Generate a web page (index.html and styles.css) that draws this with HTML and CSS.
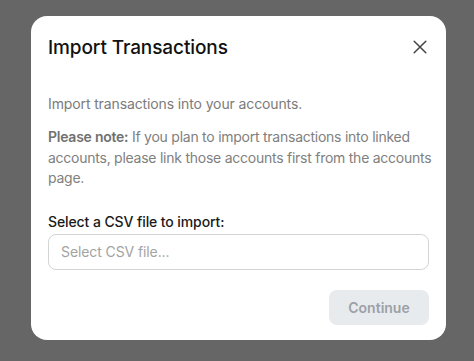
FILE: index.html
```html
<!DOCTYPE html>
<html>
<head>
<meta charset="utf-8">
<link rel="stylesheet" href="styles.css">
</head>
<body>
<div class="overlay">
  <div class="modal">
    <div class="header">
      <h2 class="title">Import Transactions</h2>
      <button class="close" aria-label="Close">
        <svg width="14" height="14" viewBox="0 0 14 14"><path d="M1.2 1.2L12.8 12.8M12.8 1.2L1.2 12.8" stroke="#444" stroke-width="1.5" stroke-linecap="round"/></svg>
      </button>
    </div>
    <p class="intro">Import transactions into your accounts.</p>
    <p class="note"><strong>Please note:</strong> If you plan to import transactions into linked<br>accounts, please link those accounts first from the accounts<br>page.</p>
    <label class="label">Select a CSV file to import:</label>
    <div class="input">Select CSV file...</div>
    <div class="footer">
      <button class="continue">Continue</button>
    </div>
  </div>
</div>
</body>
</html>
```
FILE: styles.css
```css
html, body {
  margin: 0;
  padding: 0;
  background: #666666;
  font-family: Inter, "Noto Sans", sans-serif;
}
.overlay {
  width: 474px;
  height: 361px;
  padding: 16px 28px 0 31px;
  box-sizing: border-box;
}
.modal {
  background: #ffffff;
  border-radius: 16px;
  width: 415px;
  height: 324px;
  box-sizing: border-box;
  padding: 0 17px 0 17px;
  display: flex;
  flex-direction: column;
}
.header {
  display: flex;
  align-items: center;
  justify-content: space-between;
  height: 62px;
}
.title {
  margin: 0;
  font-size: 19px;
  font-weight: 500;
  color: #111111;
  letter-spacing: -0.1px;
}
.close {
  border: none;
  background: none;
  padding: 0;
  width: 14px;
  height: 14px;
  margin-right: 2px;
  display: flex;
}
.intro {
  margin: 16px 0 0 0;
  font-size: 14px;
  color: #7b7b7b;
  line-height: 20px;
  letter-spacing: -0.12px;
}
.note {
  margin: 13px 0 0 0;
  font-size: 14px;
  color: #808080;
  line-height: 20.5px;
  letter-spacing: -0.25px;
  white-space: nowrap;
}
.note strong {
  color: #707070;
  font-weight: 600;
}
.label {
  margin-top: 23px;
  font-size: 14px;
  font-weight: 500;
  color: #1a1a1a;
  line-height: 20px;
  letter-spacing: -0.1px;
}
.input {
  margin-top: 2px;
  height: 36px;
  box-sizing: border-box;
  border: 1px solid #d4d4d4;
  border-radius: 8px;
  padding: 0 12px;
  display: flex;
  align-items: center;
  font-size: 14px;
  color: #a3a3a3;
  letter-spacing: -0.1px;
}
.footer {
  display: flex;
  justify-content: flex-end;
  margin-top: 20px;
}
.continue {
  width: 100px;
  height: 35px;
  border: none;
  border-radius: 8px;
  background: #e8ebee;
  color: #9ca1a7;
  font-family: Inter, "Noto Sans", sans-serif;
  font-size: 14px;
  font-weight: 600;
}
```
